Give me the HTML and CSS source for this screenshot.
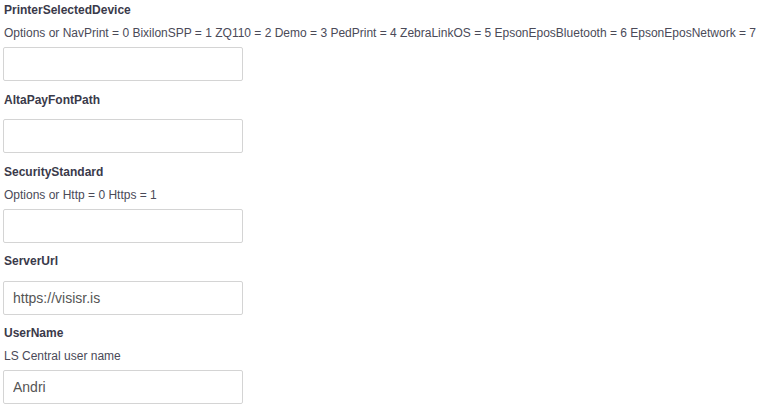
FILE: index.html
```html
<!DOCTYPE html>
<html>
<head>
<meta charset="utf-8">
<link rel="stylesheet" href="styles.css">
</head>
<body>
<div class="form">
  <div class="field">
    <div class="label">PrinterSelectedDevice</div>
    <div class="desc">Options or NavPrint = 0 BixilonSPP = 1 ZQ110 = 2 Demo = 3 PedPrint = 4 ZebraLinkOS = 5 EpsonEposBluetooth = 6 EpsonEposNetwork = 7</div>
    <input class="input" type="text" value="">
  </div>
  <div class="field">
    <div class="label">AltaPayFontPath</div>
    <input class="input" type="text" value="">
  </div>
  <div class="field">
    <div class="label">SecurityStandard</div>
    <div class="desc">Options or Http = 0 Https = 1</div>
    <input class="input" type="text" value="">
  </div>
  <div class="field">
    <div class="label">ServerUrl</div>
    <input class="input" type="text" value="https://visisr.is">
  </div>
  <div class="field">
    <div class="label">UserName</div>
    <div class="desc">LS Central user name</div>
    <input class="input" type="text" value="Andri">
  </div>
</div>
</body>
</html>
```
FILE: styles.css
```css
html, body {
  margin: 0;
  padding: 0;
  background: #ffffff;
}
body {
  font-family: "Liberation Sans", Arial, sans-serif;
  color: #3b3b4b;
}
.form {
  display: flex;
  flex-direction: column;
  padding: 0 0 0 3px;
  gap: 8.5px;
}
.field {
  display: flex;
  flex-direction: column;
}
.label {
  font-size: 12px;
  font-weight: bold;
  line-height: 20px;
  padding-left: 1px;
  color: #3a3a4a;
}
.desc {
  font-size: 12px;
  line-height: 20px;
  margin-top: 3px;
  padding-left: 1px;
  color: #4a4a58;
  white-space: nowrap;
}
.label + .input {
  margin-top: 9.5px;
}
.desc + .input {
  margin-top: 4px;
}
.input {
  box-sizing: border-box;
  width: 240px;
  height: 34px;
  margin: 0;
  border: 1px solid #d4d4d4;
  border-radius: 2px;
  padding: 0 9px;
  font-family: "Liberation Sans", Arial, sans-serif;
  font-size: 14px;
  color: #555555;
  outline: none;
  background: #fff;
}
```
